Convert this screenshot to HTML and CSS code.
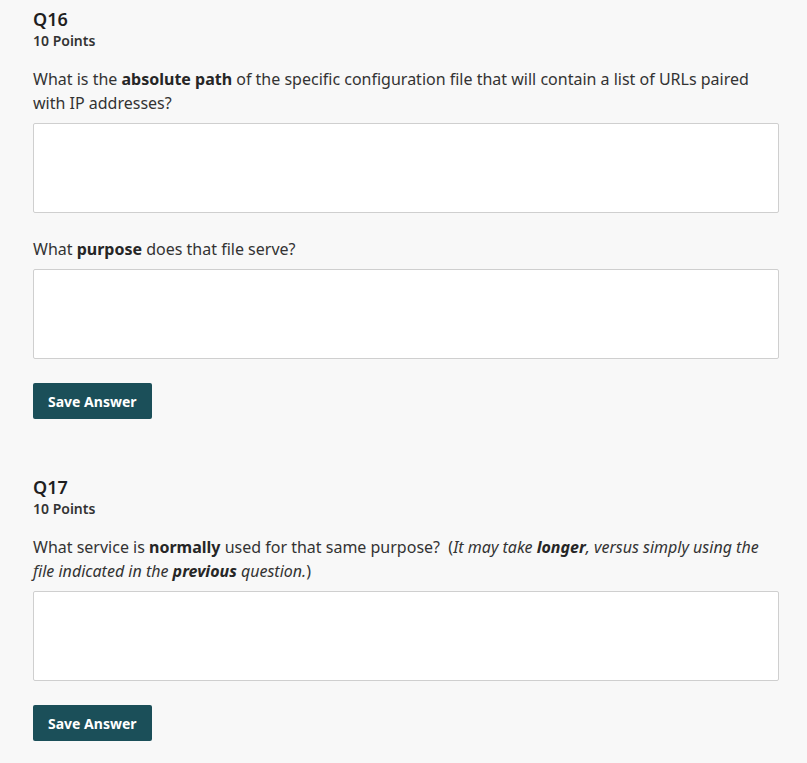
FILE: index.html
```html
<!DOCTYPE html>
<html>
<head>
<meta charset="utf-8">
<link rel="stylesheet" href="styles.css">
</head>
<body>
<div class="page">
  <section class="question">
    <h2 class="q-title">Q16</h2>
    <div class="q-points">10 Points</div>
    <p class="q-text">What is the <strong>absolute path</strong> of the specific configuration file that will contain a list of URLs paired with IP addresses?</p>
    <textarea class="answer"></textarea>
    <p class="q-text q-text-second">What <strong>purpose</strong> does that file serve?</p>
    <textarea class="answer"></textarea>
    <button class="save">Save Answer</button>
  </section>
  <section class="question q-next">
    <h2 class="q-title">Q17</h2>
    <div class="q-points">10 Points</div>
    <p class="q-text">What service is <strong>normally</strong> used for that same purpose?&nbsp; (<em>It may take <strong>longer</strong>, versus simply using the file indicated in the <strong>previous</strong> question.</em>)</p>
    <textarea class="answer"></textarea>
    <button class="save">Save Answer</button>
  </section>
</div>
</body>
</html>
```

FILE: styles.css
```css
html, body {
  margin: 0;
  padding: 0;
  background: #f8f8f8;
}
body {
  font-family: "Noto Sans", "Open Sans", sans-serif;
  color: #262626;
}
.page {
  padding: 6px 28px 0 33px;
}
.question {
  display: flex;
  flex-direction: column;
  align-items: flex-start;
}
.q-next {
  margin-top: 55px;
}
.q-title {
  margin: 0;
  font-size: 18px;
  font-weight: 600;
  line-height: 26px;
  color: #1f1f1f;
}
.q-points {
  font-size: 14px;
  font-weight: 600;
  line-height: 18px;
  color: #333;
}
.q-text {
  margin: 17px 0 0;
  font-size: 16px;
  line-height: 24px;
  color: #333;
}
.q-text strong {
  font-weight: 700;
  color: #262626;
}
.q-text-second {
  margin-top: 24px;
}
.answer {
  display: block;
  box-sizing: border-box;
  width: 100%;
  height: 90px;
  margin: 8px 0 0;
  border: 1px solid #cfcfcf;
  border-radius: 2px;
  background: #fff;
  resize: none;
  font: inherit;
}
.save {
  margin-top: 24px;
  height: 36px;
  padding: 0 15px;
  border: none;
  border-radius: 2px;
  background: #1b4f59;
  color: #fff;
  font-family: "Noto Sans", "Open Sans", sans-serif;
  font-size: 14px;
  font-weight: 700;
}
```
